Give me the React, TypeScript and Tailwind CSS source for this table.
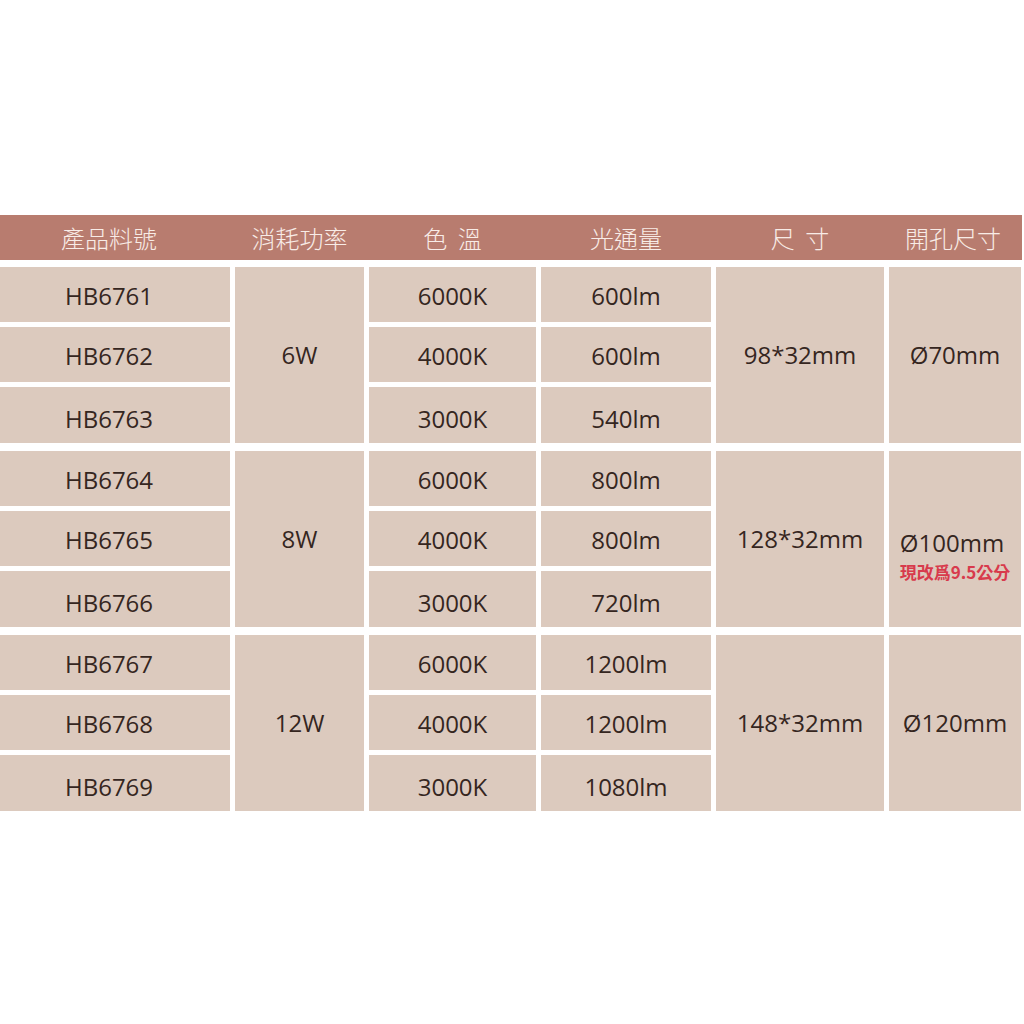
import React from "react";

const cols = "grid grid-cols-[230px_129px_167px_170px_168px_132px] gap-x-[5px]";
const cell =
  "bg-[#dccabe] flex items-center justify-center text-[24px] text-[#35261f] leading-none";

type Group = {
  codes: string[];
  watt: string;
  temps: string[];
  lumens: string[];
  size: string;
  hole: string;
  note?: string;
};

const groups: Group[] = [
  {
    codes: ["HB6761", "HB6762", "HB6763"],
    watt: "6W",
    temps: ["6000K", "4000K", "3000K"],
    lumens: ["600lm", "600lm", "540lm"],
    size: "98*32mm",
    hole: "Ø70mm",
  },
  {
    codes: ["HB6764", "HB6765", "HB6766"],
    watt: "8W",
    temps: ["6000K", "4000K", "3000K"],
    lumens: ["800lm", "800lm", "720lm"],
    size: "128*32mm",
    hole: "Ø100mm",
    note: "現改爲9.5公分",
  },
  {
    codes: ["HB6767", "HB6768", "HB6769"],
    watt: "12W",
    temps: ["6000K", "4000K", "3000K"],
    lumens: ["1200lm", "1200lm", "1080lm"],
    size: "148*32mm",
    hole: "Ø120mm",
  },
];

const headers = [
  { t: "產品料號", c: "pr-[12px]" },
  { t: "消耗功率", c: "" },
  { t: "色  溫", c: "" },
  { t: "光通量", c: "" },
  { t: "尺  寸", c: "" },
  { t: "開孔尺寸", c: "pr-[4px]" },
];

const rowPad = ["pt-[2px]", "pt-[2px]", "pt-[7px]"];

export default function App() {
  return (
    <div
      className="w-[1024px] h-[1024px] bg-white pt-[215px]"
      style={{ fontFamily: '"Open Sans", "Noto Sans CJK TC", sans-serif' }}
    >
      <div className={`${cols} bg-[#b87c6f] w-[1022px] h-[45px]`}>
        {headers.map((h) => (
          <div
            key={h.t}
            className={`flex items-center justify-center text-[24px] text-[#f8ece7] font-light leading-none whitespace-pre ${h.c}`}
            style={{ fontFamily: '"Noto Sans CJK TC", sans-serif' }}
          >
            {h.t}
          </div>
        ))}
      </div>
      <div className="mt-[7px] flex flex-col gap-[8px]">
        {groups.map((g, gi) => (
          <div
            key={gi}
            className={`${cols} grid-rows-[55px_55px_56px] gap-y-[5px]`}
          >
            {g.codes.map((c, i) => (
              <div
                key={c}
                className={`${cell} pr-[12px] ${rowPad[i]}`}
                style={{ gridColumn: 1, gridRow: i + 1 }}
              >
                {c}
              </div>
            ))}
            <div className={`${cell} col-start-2 row-start-1 row-span-3`}>{g.watt}</div>
            {g.temps.map((t, i) => (
              <div
                key={"t" + i}
                className={`${cell} ${rowPad[i]}`}
                style={{ gridColumn: 3, gridRow: i + 1 }}
              >
                {t}
              </div>
            ))}
            {g.lumens.map((l, i) => (
              <div
                key={"l" + i}
                className={`${cell} ${rowPad[i]}`}
                style={{ gridColumn: 4, gridRow: i + 1 }}
              >
                {l}
              </div>
            ))}
            <div className={`${cell} col-start-5 row-start-1 row-span-3`}>{g.size}</div>
            {g.note ? (
              <div className={`${cell} col-start-6 row-start-1 row-span-3 flex-col pt-[32px]`}>
                <span className="pr-[6px]">{g.hole}</span>
                <span
                  className="mt-[8px] text-[17px] font-bold text-[#d83a4c] leading-none"
                  style={{ fontFamily: '"Noto Sans CJK TC", sans-serif' }}
                >
                  現改爲9.5公分
                </span>
              </div>
            ) : (
              <div className={`${cell} col-start-6 row-start-1 row-span-3`}>{g.hole}</div>
            )}
          </div>
        ))}
      </div>
    </div>
  );
}
